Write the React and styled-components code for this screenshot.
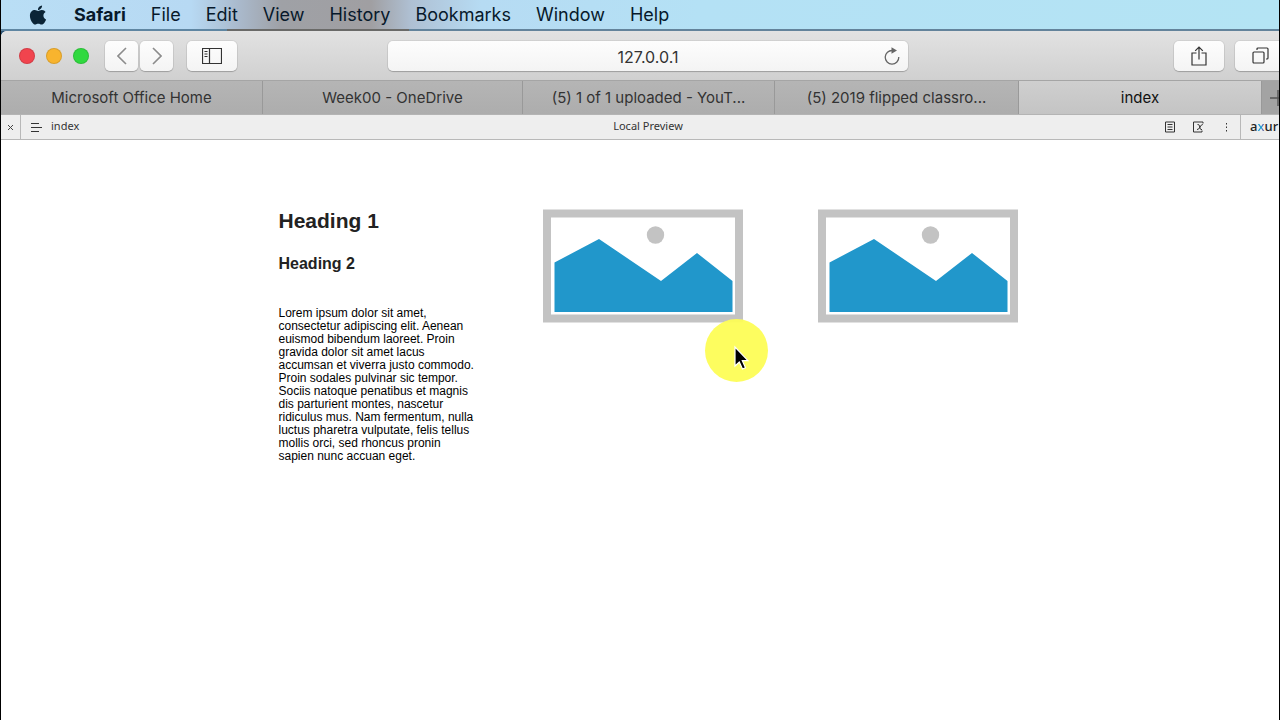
import React from 'react';
import styled, { createGlobalStyle } from 'styled-components';
import { FaApple } from 'react-icons/fa';

const GlobalStyle = createGlobalStyle`
  * {
    box-sizing: border-box;
  }

  body {
    margin: 0;
    background-color: #fff;
  }
`;

const Desktop = styled.div`
  display: flex;
  flex-direction: column;
  min-height: 100vh;
  overflow: hidden;
  border-left: 1px solid #000;
  border-right: 1px solid #000;
  font-family: Inter, 'Liberation Sans', sans-serif;
  background-color: #2f5676;
`;

const MenuBar = styled.nav`
  display: flex;
  align-items: center;
  gap: 25px;
  height: 29px;
  padding-left: 28px;
  font-size: 18px;
  line-height: 28px;
  background: linear-gradient(
    90deg,
    #b9def5 0,
    #b7d9f3 190px,
    #a9b8ca 240px,
    #9fa1a6 280px,
    #a09fa2 370px,
    #afc0d3 410px,
    #b6dbf3 480px,
    #b4e1f5 700px,
    #b4e4f4 100%
  );
`;

const MenuLink = styled.a`
  color: #07192b;
  text-decoration: none;
  font-weight: ${props => (props.$strong ? 700 : 400)};
`;

const AppleLogo = styled(FaApple)`
  display: block;
  width: 18px;
  height: 22px;
  margin-right: 2px;
  color: #0b2436;
`;

const MenuShadow = styled.div`
  height: 2px;
  background: linear-gradient(90deg, #5f86a2 226px, #6a6a68 226px, #6a6a68 408px, #63839b 408px);
`;

const BrowserWindow = styled.div`
  display: flex;
  flex-direction: column;
  flex: 1;
  margin-right: -16px;
  border-top-left-radius: 6px;
  overflow: hidden;
  background-color: #fff;
`;

const Toolbar = styled.header`
  display: flex;
  align-items: center;
  height: 49px;
  background: linear-gradient(#e2e2e2, #d0d0d0);
`;

const ToolbarSide = styled.div`
  flex: 1 1 120px;
  display: flex;
  align-items: center;
  justify-content: ${props => (props.$end ? 'flex-end' : 'flex-start')};
  gap: ${props => (props.$end ? '11px' : '14px')};
  padding: ${props => (props.$end ? '0 10px 0 0' : '0 0 0 18px')};
`;

const WindowLights = styled.div`
  display: flex;
  gap: 11px;
  margin-right: 2px;
`;

const Light = styled.button`
  width: 16px;
  height: 16px;
  padding: 0;
  border: 1px solid rgba(0, 0, 0, 0.12);
  border-radius: 50%;
  background-color: ${props => props.$color};
`;

const ButtonPair = styled.div`
  display: flex;
  gap: 2px;
`;

const ToolButton = styled.button`
  display: flex;
  align-items: center;
  justify-content: center;
  width: ${props => (props.$narrow ? '33px' : '50px')};
  height: 30px;
  padding: 0;
  border: 0;
  border-radius: 5px;
  background: linear-gradient(#fdfdfd, #f4f4f4);
  box-shadow: 0 0 0 1px rgba(0, 0, 0, 0.06), 0 1px 1px rgba(0, 0, 0, 0.2);
  color: ${props => (props.$narrow ? '#8c8c8c' : '#333')};
`;

const AddressBar = styled.div`
  display: flex;
  align-items: center;
  flex: 0 1 520px;
  height: 30px;
  padding: 0 7px 0 25px;
  border-radius: 5px;
  background: linear-gradient(#fdfdfd, #f4f4f4);
  box-shadow: 0 0 0 1px rgba(0, 0, 0, 0.06), 0 1px 1px rgba(0, 0, 0, 0.2);
`;

const AddressInput = styled.input`
  flex: 1;
  min-width: 0;
  padding: 2px 0 0;
  border: 0;
  background: none;
  color: #333;
  font-family: inherit;
  font-size: 16px;
  line-height: 20px;
  text-align: center;
`;

const ReloadButton = styled.button`
  display: flex;
  padding: 0;
  width: 18px;
  justify-content: center;
  border: 0;
  background: none;
  color: #666;
`;

const TabBar = styled.div`
  display: grid;
  grid-template-columns: 262fr 260fr 252fr 244fr 243fr 33px;
  height: 35px;
  border-top: 1px solid #a5a5a5;
  border-bottom: 1px solid #b4b4b4;
  background: linear-gradient(#b5b5b5, #adadad);
`;

const Tab = styled.button`
  padding: 0;
  border: 0;
  border-right: 1px solid #999;
  background: ${props => (props.$active ? 'linear-gradient(#cfcfcf, #c4c4c4)' : 'none')};
  color: ${props => (props.$active ? '#111' : '#333')};
  font-family: inherit;
  font-size: 15px;
  line-height: 20px;
  text-align: center;
  white-space: nowrap;
`;

const NewTab = styled.button`
  display: flex;
  align-items: center;
  padding: 0 0 0 8px;
  border: 0;
  background-color: #a3a3a3;
  color: #555;
`;

const PreviewBar = styled.div`
  display: grid;
  grid-template-columns: 1fr auto 1fr;
  height: 25px;
  border-bottom: 1px solid #b8b8b8;
  background-color: #eee;
  color: #333;
  font-family: 'Noto Sans', sans-serif;
  font-size: 11px;
  line-height: 22px;
`;

const PreviewSide = styled.div`
  display: flex;
  align-items: flex-start;
  justify-content: ${props => (props.$end ? 'flex-end' : 'flex-start')};
`;

const ClosePreview = styled.button`
  display: flex;
  align-items: center;
  justify-content: center;
  width: 20px;
  height: 24px;
  padding: 0;
  border: 0;
  border-right: 1px solid #b8b8b8;
  background: none;
  color: #444;
`;

const PlainButton = styled.button`
  display: flex;
  align-items: center;
  justify-content: center;
  width: ${props => (props.$wide ? '30px' : '28px')};
  height: 24px;
  padding: 0;
  border: 0;
  background: none;
  color: #333;
`;

const AxureLink = styled.a`
  width: 55px;
  height: 24px;
  padding-left: 9px;
  border-left: 1px solid #b8b8b8;
  color: #222;
  font-family: 'Noto Sans', sans-serif;
  font-size: 13px;
  font-weight: 500;
  text-decoration: none;

  span {
    background: linear-gradient(90deg, #1c9bd0 60%, #7a4fb0 75%, #2fae5a 100%);
    background-clip: text;
    color: transparent;
  }
`;

const Page = styled.main`
  display: grid;
  grid-template-columns: 264px 275px 200px;
  justify-content: center;
  align-items: start;
  padding-top: 69px;
  color: #000;
  font-family: 'Liberation Sans', Arial, sans-serif;
`;

const Article = styled.article`
  width: 200px;

  h1 {
    margin: 0 0 21px;
    color: #222;
    font-size: 21px;
    line-height: 24px;
  }

  h2 {
    margin: 0 0 33px;
    color: #222;
    font-size: 16px;
    line-height: 20px;
  }

  p {
    margin: 0;
    font-size: 12px;
    line-height: 13px;
  }
`;

const Figure = styled.figure`
  position: relative;
  width: 200px;
  margin: 0;

  > svg {
    display: block;
  }
`;

const Pointer = styled.div`
  position: absolute;
  top: 110px;
  left: 162px;
  width: 63px;
  height: 63px;
  border-radius: 50%;
  background-color: #fdfd56;
  opacity: 0.95;
`;

const PointerArrow = styled.svg`
  position: absolute;
  top: 136px;
  left: 190px;
`;

const menus = ['File', 'Edit', 'View', 'History', 'Bookmarks', 'Window', 'Help'];

const tabs = [
  'Microsoft Office Home',
  'Week00 - OneDrive',
  '(5) 1 of 1 uploaded - YouT...',
  '(5) 2019 flipped classro...',
  'index',
];

function Placeholder() {
  return (
    <svg width="200" height="114" viewBox="0 0 200 114" role="img" aria-label="Placeholder">
      <rect x="4" y="4.5" width="192" height="105" fill="#fff" stroke="#c3c3c3" strokeWidth="8" />
      <circle cx="112.5" cy="26" r="8.7" fill="#c3c3c3" />
      <path d="M11.5 53.5 56 30l62 42 36-28 35.5 28v31h-178z" fill="#2197cb" />
    </svg>
  );
}

function App() {
  return (
    <Desktop>
      <GlobalStyle />
      <MenuBar>
        <AppleLogo />
        <MenuLink href="#safari" $strong>Safari</MenuLink>
        {menus.map(menu => (
          <MenuLink href={`#${menu}`} key={menu}>{menu}</MenuLink>
        ))}
      </MenuBar>
      <MenuShadow />
      <BrowserWindow>
        <Toolbar>
          <ToolbarSide>
            <WindowLights>
              <Light $color="#f1444e" aria-label="Close" />
              <Light $color="#f8b42e" aria-label="Minimize" />
              <Light $color="#30d93f" aria-label="Zoom" />
            </WindowLights>
            <ButtonPair>
              <ToolButton $narrow aria-label="Back">
                <svg width="10" height="18" viewBox="0 0 10 18" fill="none" stroke="currentColor" strokeWidth="1.6">
                  <path d="M9 1 1 9l8 8" />
                </svg>
              </ToolButton>
              <ToolButton $narrow aria-label="Forward">
                <svg width="10" height="18" viewBox="0 0 10 18" fill="none" stroke="currentColor" strokeWidth="1.6">
                  <path d="m1 1 8 8-8 8" />
                </svg>
              </ToolButton>
            </ButtonPair>
            <ToolButton aria-label="Show sidebar">
              <svg width="20" height="16" viewBox="0 0 20 16" fill="none" stroke="currentColor">
                <path d="M.5.5h19v15H.5zM7.5.5v15" strokeWidth="1.2" />
                <path d="M2.5 3.5h3M2.5 6h3M2.5 8.5h3" />
              </svg>
            </ToolButton>
          </ToolbarSide>
          <AddressBar>
            <AddressInput aria-label="Address" defaultValue="127.0.0.1" />
            <ReloadButton aria-label="Reload">
              <svg width="16" height="18" viewBox="0 0 16 18" fill="none" stroke="currentColor" strokeWidth="1.3">
                <path d="M8.5 3.5A6.8 6.8 0 1 0 14.8 10" />
                <path d="M7.5.3v6.4L13 3.5z" fill="currentColor" stroke="none" />
              </svg>
            </ReloadButton>
          </AddressBar>
          <ToolbarSide $end>
            <ToolButton aria-label="Share">
              <svg width="16" height="20" viewBox="0 0 16 20" fill="none" stroke="currentColor" strokeWidth="1.2">
                <path d="M5.5 7H1v12h14V7h-4.5M8 13.5V1M4.2 4.8 8 1l3.8 3.8" />
              </svg>
            </ToolButton>
            <ToolButton aria-label="Show all tabs">
              <svg width="17" height="17" viewBox="0 0 17 17" fill="none" stroke="currentColor" strokeWidth="1.2">
                <rect x="1" y="5" width="11" height="11" rx="1" />
                <path d="M5 3V2q0-1 1-1h9q1 0 1 1v9q0 1-1 1h-1" />
              </svg>
            </ToolButton>
          </ToolbarSide>
        </Toolbar>
        <TabBar>
          {tabs.map(tab => (
            <Tab key={tab} $active={tab === 'index'}>{tab}</Tab>
          ))}
          <NewTab aria-label="New tab">
            <svg width="16" height="16" viewBox="0 0 16 16" stroke="currentColor" strokeWidth="1.4">
              <path d="M8 0v16M0 8h16" />
            </svg>
          </NewTab>
        </TabBar>
        <PreviewBar>
          <PreviewSide>
            <ClosePreview aria-label="Close preview">
              <svg width="5" height="5" viewBox="0 0 5 5" stroke="currentColor">
                <path d="m0 0 5 5M5 0 0 5" />
              </svg>
            </ClosePreview>
            <PlainButton $wide aria-label="Pages">
              <svg width="11" height="11" viewBox="0 0 11 11" stroke="currentColor" strokeWidth="1.2">
                <path d="M0 1.5h8M0 5.5h11M0 9.5h8" />
              </svg>
            </PlainButton>
            <span>index</span>
          </PreviewSide>
          <span>Local Preview</span>
          <PreviewSide $end>
            <PlainButton aria-label="Documentation">
              <svg width="10" height="12" viewBox="0 0 10 12" fill="none" stroke="currentColor">
                <path d="M.5 1h9v10h-9zM2.5 3.5h5M2.5 6h5M2.5 8.5h5" />
              </svg>
            </PlainButton>
            <PlainButton aria-label="Variables">
              <svg width="11" height="12" viewBox="0 0 11 12" fill="none" stroke="currentColor">
                <path d="M10 2.5V1H.5v10H9V9.5" />
                <path d="M4.5 3.5q1.500-.5 2 1.500l.8 3q.4 1 1.700.5M9.800 3.500Q8.500 3.200 7 6 5.500 9 4 8.500" />
              </svg>
            </PlainButton>
            <PlainButton aria-label="More options">
              <svg width="3" height="9" viewBox="0 0 3 9" fill="currentColor">
                <path d="M1 0h1v1.5H1zM1 3.5h1V5H1zM1 7h1v1.5H1z" />
              </svg>
            </PlainButton>
            <AxureLink href="#axure">a<span>x</span>ur</AxureLink>
          </PreviewSide>
        </PreviewBar>
        <Page>
          <Article>
            <h1>Heading 1</h1>
            <h2>Heading 2</h2>
            <p>
              Lorem ipsum dolor sit amet, consectetur adipiscing elit. Aenean euismod bibendum
              laoreet. Proin gravida dolor sit amet lacus accumsan et viverra justo commodo. Proin
              sodales pulvinar sic tempor. Sociis natoque penatibus et magnis dis parturient montes,
              nascetur ridiculus mus. Nam fermentum, nulla luctus pharetra vulputate, felis tellus
              mollis orci, sed rhoncus pronin sapien nunc accuan eget.
            </p>
          </Article>
          <Figure>
            <Placeholder />
            <Pointer />
            <PointerArrow width="16" height="26" viewBox="0 0 16 26">
              <path d="M2 2v19l4.3-4 3.2 7 3-1.3-3.2-7H15z" fill="#000" stroke="#fff" strokeWidth="1.2" />
            </PointerArrow>
          </Figure>
          <Figure>
            <Placeholder />
          </Figure>
        </Page>
      </BrowserWindow>
    </Desktop>
  );
}

export default App;
